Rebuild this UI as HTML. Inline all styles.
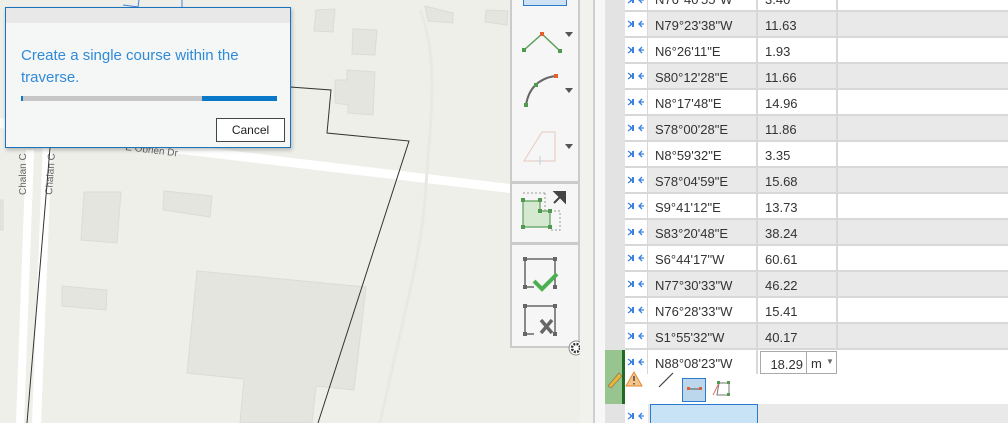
<!DOCTYPE html>
<html><head><style>
*{margin:0;padding:0;box-sizing:border-box}
body{width:1008px;height:423px;overflow:hidden;position:relative;background:#efefea;font-family:"Liberation Sans",sans-serif}
.abs{position:absolute}
.row{position:absolute;left:625px;width:383px;height:26px;border-bottom:2px solid #d8d8d8}
.row.g{background:#e9e9e9}.row.w{background:#fff}
.row .ic{position:absolute;left:0;top:0;width:23px;height:24px;border-right:1px solid #d8d8d8;background:#fff}
.row .d{position:absolute;left:23px;top:0;width:110px;height:24px;border-right:2px solid #d8d8d8;font-size:13px;color:#333;padding:6px 0 0 7px}
.row .l{position:absolute;left:133px;top:0;width:80px;height:24px;border-right:2px solid #d8d8d8;font-size:13px;color:#333;padding:6px 0 0 7px}
</style></head><body>
<svg class="abs" style="left:0;top:0" width="600" height="423">
<rect width="600" height="423" fill="#efefea"/>
<g fill="#e5e5df" stroke="#dcdcd5" stroke-width="1">
<polygon points="316,10 335,9 333,32 314,31"/>
<polygon points="353,29 377,30 375,55 352,54"/>
<polygon points="347,70 375,72 373,115 348,113 348,105 335,103 335,80 347,80"/>
<polygon points="425,6 453,13 453,23 428,21"/>
<polygon points="486,10 508,11 507,25 485,22"/>
<polygon points="84,192 121,192 117,243 81,240"/>
<polygon points="164,191 212,196 210,217 163,210"/>
<polygon points="62,286 107,290 106,310 62,306"/>
<polygon points="197,271 366,287 354,390 316,386 312,423 240,423 244,379 187,373"/>
<polygon points="0,200 3,200 3,230 0,230"/>
</g>
<polygon points="0,118 40,125 40,135 0,128" fill="#fafaf7"/>
<polygon points="150,141 510,184 510,193 148,150" fill="#fff"/>
<polygon points="26,150 34,150 24,423 16,423" fill="#fff"/>
<polygon points="43,140 52,140 41,423 32,423" fill="#fff"/>
<text x="125" y="150" font-size="10" fill="#666" transform="rotate(7 125 150)" font-family="Liberation Sans">E Obrien Dr</text>
<text x="26" y="195" font-size="10" fill="#666" transform="rotate(-90 26 195)">Chalan C</text>
<text x="52" y="195" font-size="10" fill="#666" transform="rotate(-86 52 195)">Chalan C</text>
<polyline points="290,87 331,90 327,133 409,141 318,423" fill="none" stroke="#333" stroke-width="1"/>
<polyline points="50,148 27,423" fill="none" stroke="#333" stroke-width="1"/>
<polyline points="123,5 138,7 139,0" fill="none" stroke="#4a7fd0" stroke-width="1"/>
<line x1="182" y1="0" x2="182" y2="7" stroke="#4a7fd0"/>
<path d="M420 10 C 440 60 430 120 425 200 C 420 260 400 330 380 423" fill="none" stroke="#e9e9e3" stroke-width="3"/>
</svg>
<!-- dialog -->
<div class="abs" style="left:5px;top:7px;width:286px;height:141px;border:1px solid #1a74bd;background:#f5f7f7;box-shadow:1px 2px 4px rgba(0,0,0,.25)">
<div style="height:15px;background:#e8e8e8"></div>
<div style="position:absolute;left:15px;top:37px;font-size:15px;color:#2f8ad8;line-height:22px;width:260px">Create a single course within the traverse.</div>
<div style="position:absolute;left:15px;top:88px;width:256px;height:5px;background:#c6c6c6"><div style="position:absolute;left:0;top:0;width:2px;height:5px;background:#0a78c8"></div><div style="position:absolute;left:181px;top:0;width:75px;height:5px;background:#0a78c8"></div></div>
<div style="position:absolute;left:210px;top:110px;width:69px;height:24px;border:1px solid #444;background:#fff;font-size:12px;color:#222;text-align:center;line-height:22px">Cancel</div>
</div>
<!-- toolbar -->
<div class="abs" style="left:510px;top:0;width:70px;height:348px;background:#f6f6f6;border:2px solid #cbcbcb;border-top:none"></div>
<div class="abs" style="left:512px;top:181px;width:66px;height:3px;background:#cbcbcb"></div>
<div class="abs" style="left:512px;top:242px;width:66px;height:3px;background:#cbcbcb"></div>
<div class="abs" style="left:523px;top:0;width:44px;height:6px;border:1px solid #2a7bd0;border-top:none;background:#cde3f5"></div>
<svg class="abs" style="left:512px;top:0" width="90" height="360">
<polyline points="12,50 30,34 48,51" fill="none" stroke="#5aa05a" stroke-width="1.5"/>
<rect x="10" y="48" width="4" height="4" fill="#4f9a4f"/><rect x="28" y="32" width="4" height="4" fill="#e06030"/><rect x="46" y="49" width="4" height="4" fill="#4f9a4f"/>
<polygon points="53,32 61,32 57,37" fill="#555"/>
<path d="M14 105 Q 18 80 43 76" fill="none" stroke="#666" stroke-width="2"/>
<rect x="12" y="103" width="4" height="4" fill="#4f9a4f"/><rect x="22" y="83" width="4" height="4" fill="#4f9a4f"/><rect x="42" y="74" width="4" height="4" fill="#e06030"/>
<polygon points="53,88 61,88 57,93" fill="#555"/>
<path d="M30 132 L43 132 L43 161 L31 161 M25 161 L12 161 L30 132" fill="none" stroke="#e8c8c0" stroke-width="1"/>
<path d="M28 156 v9 M24 161 h8" stroke="#ccc"/>
<polygon points="53,144 61,144 57,149" fill="#555"/>
<rect x="11" y="201" width="17" height="26" fill="#d5e9d1"/><rect x="11" y="211" width="27" height="16" fill="#d5e9d1"/>
<path d="M11 201 H28 V211 H38 V227 H11 Z" fill="none" stroke="#5aa05a" stroke-width="1.2"/>
<path d="M11 193 H33 M33 193 V211 M38 211 H48 V230 H38" fill="none" stroke="#999" stroke-dasharray="2,2"/>
<path d="M43 192 L53 192 L53 202 Z M42 203 L50 195" fill="#444" stroke="#444" stroke-width="2"/>
<g fill="#555"><rect x="9" y="198" width="4" height="4" fill="#4f9a4f"/><rect x="26" y="198" width="4" height="4" fill="#4f9a4f"/><rect x="26" y="209" width="4" height="4" fill="#4f9a4f"/><rect x="36" y="209" width="4" height="4" fill="#4f9a4f"/><rect x="9" y="225" width="4" height="4" fill="#4f9a4f"/><rect x="36" y="225" width="4" height="4" fill="#4f9a4f"/></g>
<path d="M13 259 H43 V287 M13 259 V287 H22" fill="none" stroke="#666" stroke-width="1.5"/>
<path d="M22 281 L30 289 L45 274" fill="none" stroke="#4caf50" stroke-width="4"/>
<g fill="#666"><rect x="11" y="257" width="4" height="4"/><rect x="41" y="257" width="4" height="4"/><rect x="11" y="285" width="4" height="4"/><rect x="41" y="285" width="4" height="4"/></g>
<path d="M13 306 H43 V334 M13 306 V334 H22" fill="none" stroke="#666" stroke-width="1.5"/>
<path d="M29 320 L40 333 M40 320 L29 333" stroke="#666" stroke-width="3.5"/>
<g fill="#666"><rect x="11" y="304" width="4" height="4"/><rect x="41" y="304" width="4" height="4"/><rect x="11" y="332" width="4" height="4"/><rect x="41" y="332" width="4" height="4"/></g>
<circle cx="64" cy="348" r="7" fill="#fff" stroke="#888"/><circle cx="64" cy="348" r="4" fill="none" stroke="#333" stroke-width="2.5" stroke-dasharray="2,1.2"/>
</svg>
<!-- strip -->
<div class="abs" style="left:580px;top:0;width:13px;height:423px;background:#f1f1ee"></div>
<div class="abs" style="left:593px;top:0;width:2px;height:423px;background:#cfcfcf"></div>
<div class="abs" style="left:595px;top:0;width:10px;height:423px;background:#f7f7f7"></div>
<div class="abs" style="left:605px;top:0;width:20px;height:423px;background:#e3e3e3"></div>
<!-- rows -->
<div class="row w" style="top:-14px"><div class="ic"></div><div class="d">N76°40'55"W</div><div class="l">3.40</div></div>
<div class="row g" style="top:12px"><div class="ic"></div><div class="d">N79°23'38"W</div><div class="l">11.63</div></div>
<div class="row w" style="top:38px"><div class="ic"></div><div class="d">N6°26'11"E</div><div class="l">1.93</div></div>
<div class="row g" style="top:64px"><div class="ic"></div><div class="d">S80°12'28"E</div><div class="l">11.66</div></div>
<div class="row w" style="top:90px"><div class="ic"></div><div class="d">N8°17'48"E</div><div class="l">14.96</div></div>
<div class="row g" style="top:116px"><div class="ic"></div><div class="d">S78°00'28"E</div><div class="l">11.86</div></div>
<div class="row w" style="top:142px"><div class="ic"></div><div class="d">N8°59'32"E</div><div class="l">3.35</div></div>
<div class="row g" style="top:168px"><div class="ic"></div><div class="d">S78°04'59"E</div><div class="l">15.68</div></div>
<div class="row w" style="top:194px"><div class="ic"></div><div class="d">S9°41'12"E</div><div class="l">13.73</div></div>
<div class="row g" style="top:220px"><div class="ic"></div><div class="d">S83°20'48"E</div><div class="l">38.24</div></div>
<div class="row w" style="top:246px"><div class="ic"></div><div class="d">S6°44'17"W</div><div class="l">60.61</div></div>
<div class="row g" style="top:272px"><div class="ic"></div><div class="d">N77°30'33"W</div><div class="l">46.22</div></div>
<div class="row w" style="top:298px"><div class="ic"></div><div class="d">N76°28'33"W</div><div class="l">15.41</div></div>
<div class="row g" style="top:324px"><div class="ic"></div><div class="d">S1°55'32"W</div><div class="l">40.17</div></div>
<div class="row w" style="top:350px;border-bottom:none"><div class="ic"></div><div class="d">N88°08'23"W</div><div class="l" style="border:none"></div></div>
<div class="abs" style="left:760px;top:351px;width:47px;height:23px;border:1px solid #aaa;background:#fff;font-size:13px;color:#333;text-align:right;padding:5px 3px 0 0">18.29</div>
<div class="abs" style="left:806px;top:351px;width:31px;height:23px;border:1px solid #aaa;background:#fff;font-size:13px;color:#333;padding:4px 0 0 4px">m</div>
<div class="abs" style="left:826px;top:357px;font-size:8px;color:#666">▼</div>
<div class="abs" style="left:625px;top:376px;width:383px;height:28px;background:#fff"></div>
<div class="abs" style="left:625px;top:404px;width:383px;height:19px;background:#e9e9e9"></div>
<div class="abs" style="left:625px;top:404px;width:23px;height:19px;background:#fff"></div>
<div class="abs" style="left:650px;top:404px;width:108px;height:19px;background:#c8e2f6;border:1px solid #2a7bd0;border-bottom:none"></div>
<div class="abs" style="left:605px;top:350px;width:20px;height:54px;background:#98c490"></div>
<div class="abs" style="left:622px;top:350px;width:3px;height:54px;background:#1f6b23"></div>
<div class="abs" style="left:682px;top:378px;width:24px;height:24px;background:#bcd6ec;border:1px solid #2a7bd0"></div>
<svg class="abs" style="left:605px;top:0" width="130" height="423">
<g id="ic" fill="none" stroke="#3b82e0" stroke-width="1.3">
<path d="M23 21 l4 3 l-4 3 M25 24 h1"/><path d="M28 21 v6" stroke-width="2"/>
<path d="M37 21 l-3 3 l3 3 M34 24 h5"/>
</g>
<use href="#ic" y="26"/><use href="#ic" y="52"/><use href="#ic" y="78"/><use href="#ic" y="104"/><use href="#ic" y="130"/><use href="#ic" y="156"/><use href="#ic" y="182"/><use href="#ic" y="208"/><use href="#ic" y="234"/><use href="#ic" y="260"/><use href="#ic" y="286"/><use href="#ic" y="312"/><use href="#ic" y="338"/><use href="#ic" y="392"/><use href="#ic" y="-24"/>
<path d="M3 386 L14 373 L17 376 L6 388 Z" fill="#e8b830" stroke="#866" stroke-width=".6"/>
<polygon points="29,372 37,386 21,386" fill="#f5c48a" stroke="#e08a30"/>
<path d="M29 376 v5 M29 383 v1.5" stroke="#333" stroke-width="1.3"/>
<path d="M54 387 L68 373" stroke="#444" stroke-width="1.2"/>
<path d="M83 389 H95" stroke="#555"/><rect x="82" y="387" width="3" height="3" fill="#e06030"/><rect x="94" y="387" width="3" height="3" fill="#e06030"/>
<path d="M114 383 L112 395 H124 V383 Z" fill="none" stroke="#777"/>
<path d="M114 383 L108 395" stroke="#e07060"/>
<rect x="112" y="381" width="3" height="3" fill="#4f9a4f"/><rect x="122" y="381" width="3" height="3" fill="#4f9a4f"/><rect x="122" y="393" width="3" height="3" fill="#4f9a4f"/>
</svg>
</body></html>
